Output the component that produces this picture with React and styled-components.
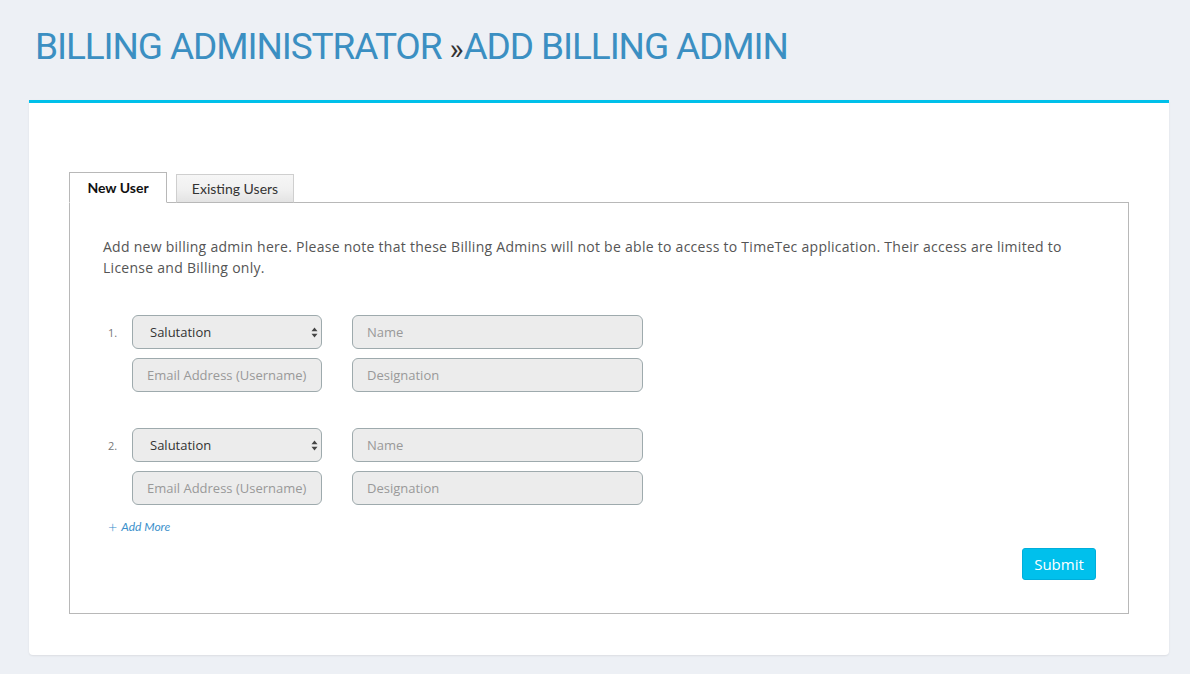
import React from 'react'
import styled, { createGlobalStyle } from 'styled-components'

const GlobalStyle = createGlobalStyle`
  html, body {
    margin: 0;
    padding: 0;
    background: #edf0f5;
  }
  body {
    font-family: 'Lato', 'Open Sans', sans-serif;
  }
  * { box-sizing: border-box; }
`

function Arrows() {
  return (
    <svg width="7" height="11" viewBox="0 0 7 11" fill="#444">
      <path d="M3.5 0.5 L6.5 4.2 L0.5 4.2 Z" />
      <path d="M3.5 10.5 L6.5 6.8 L0.5 6.8 Z" />
    </svg>
  )
}

function AdminGroup({ index }) {
  return (
    <Group>
      <Num>{index}.</Num>
      <SelectWrap>
        <Select defaultValue="">
          <option value="">Salutation</option>
          <option>Mr.</option>
          <option>Ms.</option>
          <option>Mrs.</option>
          <option>Dr.</option>
        </Select>
        <ArrowBox><Arrows /></ArrowBox>
      </SelectWrap>
      <Spacer />
      <Field placeholder="Name" />
      <span />
      <Field placeholder="Email Address (Username)" />
      <Spacer />
      <Field placeholder="Designation" />
    </Group>
  )
}

export default function App() {
  return (
    <Page>
      <GlobalStyle />
      <Title>
        BILLING ADMINISTRATOR <Sep>»</Sep>ADD BILLING ADMIN
      </Title>
      <Card>
        <Tabs>
          <Tab active>New User</Tab>
          <Tab>Existing Users</Tab>
        </Tabs>
        <Panel>
          <Intro>
            Add new billing admin here. Please note that these Billing Admins will not be able to access to TimeTec application. Their access are limited to License and Billing only.
          </Intro>
          <Groups>
            <AdminGroup index={1} />
            <AdminGroup index={2} />
          </Groups>
          <AddMore href="#"><Plus>+</Plus> Add More</AddMore>
          <Actions>
            <Submit type="button">Submit</Submit>
          </Actions>
        </Panel>
      </Card>
    </Page>
  )
}

const Page = styled.div`
  padding: 26px 21px 20px 29px;
  min-height: 674px;
`

const Title = styled.h1`
  margin: 0 0 30px 6px;
  font-family: 'Roboto', 'Liberation Sans', sans-serif;
  font-weight: 400;
  font-size: 37px;
  line-height: 42px;
  color: #3b8fc2;
  letter-spacing: -1.1px;
  white-space: nowrap;
`

const Sep = styled.span`
  color: #333;
  font-size: 30px;
  letter-spacing: 0;
`

const Card = styled.div`
  background: #fff;
  border-top: 3px solid #00c0ea;
  border-radius: 0 0 4px 4px;
  box-shadow: 0 1px 2px rgba(0, 0, 0, 0.08);
  padding: 69px 40px 41px;
`

const Tabs = styled.div`
  display: flex;
  align-items: flex-end;
  gap: 9px;
`

const Tab = styled.div`
  position: relative;
  margin-bottom: -1px;
  height: ${p => (p.active ? '31px' : '29px')};
  padding: 0 12px;
  min-width: ${p => (p.active ? '98px' : '118px')};
  display: flex;
  align-items: center;
  justify-content: center;
  font-family: 'Lato', sans-serif;
  font-size: 14px;
  font-weight: ${p => (p.active ? 700 : 400)};
  color: ${p => (p.active ? '#111' : '#333')};
  background: ${p => (p.active ? '#fff' : 'linear-gradient(#f6f6f6, #f0f0f0 55%, #e3e3e3)')};
  border: 1px solid ${p => (p.active ? '#b8b8b8' : '#cfcfcf')};
  border-bottom: 1px solid ${p => (p.active ? '#fff' : '#b8b8b8')};
  z-index: ${p => (p.active ? 2 : 1)};
  cursor: pointer;
`

const Panel = styled.div`
  border: 1px solid #b8b8b8;
  padding: 33px 32px 33px 33px;
`

const Intro = styled.p`
  margin: 0 0 37px;
  font-family: 'Open Sans', sans-serif;
  font-size: 14px;
  line-height: 21px;
  letter-spacing: 0.27px;
  color: #555;
`

const Groups = styled.div`
  display: flex;
  flex-direction: column;
  gap: 36px;
`

const Group = styled.div`
  display: grid;
  grid-template-columns: 29px 190px 30px 291px;
  grid-auto-rows: 34px;
  row-gap: 9px;
`

const Spacer = styled.span``

const Num = styled.span`
  align-self: center;
  padding-left: 5px;
  font-family: 'Open Sans', sans-serif;
  font-size: 11px;
  color: #777;
`

const fieldBase = `
  width: 100%;
  height: 34px;
  border: 1px solid #9eaaad;
  border-radius: 6px;
  background: #ececec;
  font-family: 'Open Sans', sans-serif;
  font-size: 13px;
  outline: none;
`

const Field = styled.input`
  ${fieldBase}
  padding: 0 14px;
  color: #333;
  &::placeholder { color: #999; }
`

const SelectWrap = styled.div`
  position: relative;
`

const Select = styled.select`
  ${fieldBase}
  appearance: none;
  -webkit-appearance: none;
  padding: 0 24px 0 17px;
  color: #333;
`

const ArrowBox = styled.span`
  position: absolute;
  right: 4px;
  top: 12px;
  display: flex;
  pointer-events: none;
`

const AddMore = styled.a`
  display: inline-flex;
  align-items: center;
  gap: 4px;
  margin: 13px 0 0 5px;
  font-family: 'Lato', sans-serif;
  font-style: italic;
  font-size: 12px;
  line-height: 18px;
  color: #3a8fcb;
  text-decoration: none;
`

const Plus = styled.span`
  font-style: normal;
  font-size: 16px;
  font-weight: 300;
`

const Actions = styled.div`
  display: flex;
  justify-content: flex-end;
  margin-top: 12px;
`

const Submit = styled.button`
  width: 74px;
  height: 32px;
  border: 1px solid #00aedb;
  border-radius: 3px;
  background: #00c0ec;
  color: #fff;
  font-family: 'Open Sans', sans-serif;
  font-size: 15px;
  cursor: pointer;
`
